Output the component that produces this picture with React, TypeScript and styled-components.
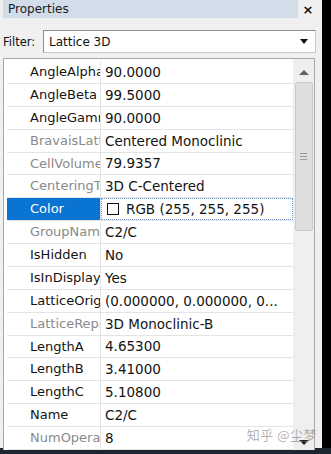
import styled, { createGlobalStyle } from "styled-components";

const GlobalStyle = createGlobalStyle`
  html, body {
    margin: 0;
    padding: 0;
    background: #000;
  }
  body {
    font-family: "DejaVu Sans", "Noto Sans", "Noto Sans CJK SC", sans-serif;
    font-size: 13px;
  }
`;

const Screen = styled.div`
  width: 331px;
  height: 454px;
  display: flex;
  flex-direction: column;
  overflow: hidden;
  background: #000;
`;

const Main = styled.div`
  display: flex;
  height: 448px;
`;

const Panel = styled.div`
  width: 322px;
  display: flex;
  flex-direction: column;
  background: #f0f0f0;
  padding-left: 3px;
  box-sizing: border-box;
`;

const Footer = styled.div`
  flex: 1;
  background: #1c2630;
`;

const Header = styled.div`
  display: flex;
  height: 18px;
`;

const TitleBand = styled.div`
  width: 295px;
  background: #d2dde9;
  color: #1a1a1a;
  font-size: 12px;
  line-height: 18px;
  padding-left: 5px;
  box-sizing: border-box;
`;

const CloseBtn = styled.div`
  flex: 1;
  display: flex;
  align-items: center;
  justify-content: center;
  font-size: 13px;
  font-weight: bold;
  color: #111;
  padding-right: 4px;
`;

const FilterRow = styled.div`
  display: flex;
  align-items: center;
  margin-top: 12px;
  height: 23px;
  gap: 5px;
`;

const FilterLabel = styled.span`
  width: 35px;
  color: #111;
  font-size: 11.5px;
`;

const Combo = styled.div`
  width: 273px;
  height: 23px;
  box-sizing: border-box;
  display: flex;
  align-items: center;
  background: #fff;
  border: 1px solid #8d8d8d;
  border-right-color: #c8c8c8;
  border-bottom-color: #c8c8c8;
  padding-left: 5px;
  color: #111;
  font-size: 12px;
`;

const ComboText = styled.span`
  flex: 1;
`;

const ComboArrow = styled.div`
  width: 0;
  height: 0;
  border-left: 4px solid transparent;
  border-right: 4px solid transparent;
  border-top: 5px solid #111;
  margin-right: 7px;
`;

const Grid = styled.div`
  margin-top: 5px;
  width: 310px;
  flex: 1;
  display: flex;
  border: 1px solid #a8a8a8;
  border-bottom: none;
  background: #fff;
  position: relative;
`;

const Rows = styled.div`
  flex: 1;
  padding: 2px 0 0 3px;
  display: flex;
  flex-direction: column;
`;

const Row = styled.div`
  display: grid;
  grid-template-columns: 93px 1px 1fr;
  height: 22.875px;
  box-sizing: border-box;
  border-bottom: 1px solid #e4e4e4;
  flex-shrink: 0;
`;

const NameCell = styled.div<{ $dim?: boolean; $selected?: boolean }>`
  padding-left: 23px;
  white-space: nowrap;
  overflow: hidden;
  text-overflow: clip;
  line-height: 22px;
  color: ${(p) => (p.$selected ? "#fff" : p.$dim ? "#8a8a8a" : "#141414")};
  background: ${(p) => (p.$selected ? "#0a74d3" : "transparent")};
`;

const Divider = styled.div`
  background: #e4e4e4;
`;

const ValueCell = styled.div<{ $focused?: boolean }>`
  padding-left: 3px;
  white-space: nowrap;
  overflow: hidden;
  font-size: 13.5px;
  line-height: 20px;
  color: #141414;
  display: flex;
  align-items: center;
  gap: 7px;
  box-sizing: border-box;
  border: 1px dotted ${(p) => (p.$focused ? "#6e95c7" : "transparent")};
`;

const Swatch = styled.span`
  width: 12px;
  height: 12px;
  box-sizing: border-box;
  border: 1px solid #111;
  background: #fff;
  margin-left: 2px;
`;

const Scrollbar = styled.div`
  width: 21px;
  background: #efefef;
  display: flex;
  flex-direction: column;
  align-items: center;
  padding-top: 11px;
  box-sizing: border-box;
`;

const Arrow = styled.div<{ $down?: boolean }>`
  width: 0;
  height: 0;
  border-left: 5px solid transparent;
  border-right: 5px solid transparent;
  ${(p) =>
    p.$down
      ? "border-top: 5px solid #222;"
      : "border-bottom: 5px solid #606060;"}
`;

const Thumb = styled.div`
  margin-top: 7px;
  width: 18px;
  height: 149px;
  box-sizing: border-box;
  background: #dedede;
  border: 1px solid #cacaca;
  border-radius: 2px;
  display: flex;
  align-items: center;
  justify-content: center;
`;

const Grip = styled.div`
  width: 7px;
  height: 5px;
  border-top: 1px solid #9a9a9a;
  border-bottom: 1px solid #9a9a9a;
  position: relative;
  &::after {
    content: "";
    position: absolute;
    left: 0;
    right: 0;
    top: 2px;
    height: 1px;
    background: #9a9a9a;
  }
`;

const Track = styled.div`
  flex: 1;
`;

const DownBox = styled.div`
  height: 14px;
  display: flex;
  align-items: center;
`;

const Watermark = styled.div`
  position: absolute;
  right: -3px;
  bottom: 6px;
  font-family: "Noto Sans CJK SC", sans-serif;
  font-size: 13px;
  color: rgba(150, 150, 150, 0.75);
  letter-spacing: 0.5px;
`;

const Side = styled.div`
  flex: 1;
  background: #000;
`;

type Prop = { name: string; value: string; dim?: boolean; color?: boolean };

const props: Prop[] = [
  { name: "AngleAlpha", value: "90.0000" },
  { name: "AngleBeta", value: "99.5000" },
  { name: "AngleGamma", value: "90.0000" },
  { name: "BravaisLattice", value: "Centered Monoclinic", dim: true },
  { name: "CellVolume", value: "79.9357", dim: true },
  { name: "CenteringType", value: "3D C-Centered", dim: true },
  { name: "Color", value: "RGB (255, 255, 255)", color: true },
  { name: "GroupName", value: "C2/C", dim: true },
  { name: "IsHidden", value: "No" },
  { name: "IsInDisplay", value: "Yes" },
  { name: "LatticeOrigin", value: "(0.000000, 0.000000, 0..." },
  { name: "LatticeRepresentation", value: "3D Monoclinic-B", dim: true },
  { name: "LengthA", value: "4.65300" },
  { name: "LengthB", value: "3.41000" },
  { name: "LengthC", value: "5.10800" },
  { name: "Name", value: "C2/C" },
  { name: "NumOperators", value: "8", dim: true },
];

const App = () => {
  return (
    <Screen>
      <GlobalStyle />
      <Main>
        <Panel>
          <Header>
            <TitleBand>Properties</TitleBand>
            <CloseBtn>×</CloseBtn>
          </Header>
          <FilterRow>
            <FilterLabel>Filter:</FilterLabel>
            <Combo>
              <ComboText>Lattice 3D</ComboText>
              <ComboArrow />
            </Combo>
          </FilterRow>
          <Grid>
            <Rows>
              {props.map((p) => (
                <Row key={p.name}>
                  <NameCell $dim={p.dim} $selected={p.color}>
                    {p.name}
                  </NameCell>
                  <Divider />
                  <ValueCell $focused={p.color}>
                    {p.color && <Swatch />}
                    {p.value}
                  </ValueCell>
                </Row>
              ))}
            </Rows>
            <Scrollbar>
              <Arrow />
              <Thumb>
                <Grip />
              </Thumb>
              <Track />
              <DownBox>
                <Arrow $down />
              </DownBox>
            </Scrollbar>
            <Watermark>知乎 @尘梦</Watermark>
          </Grid>
        </Panel>
        <Side />
      </Main>
      <Footer />
    </Screen>
  );
};

export default App;
